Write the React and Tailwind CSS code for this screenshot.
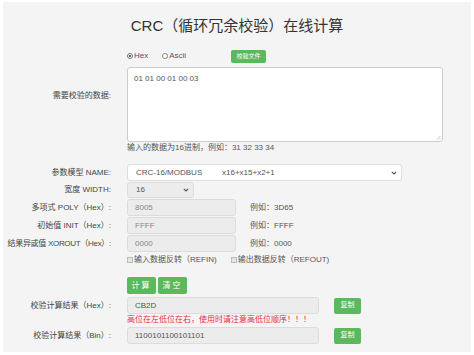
const font = { fontFamily: '"Liberation Sans", "Noto Sans CJK SC", sans-serif' };

const Chevron = () => (
  <svg width="6" height="4" viewBox="0 0 6 4" className="shrink-0">
    <path d="M0.8 0.8 L3 3 L5.2 0.8" fill="none" stroke="#555" strokeWidth="1.1" />
  </svg>
);

const Row = ({ label, className = "", labelClass = "", children }) => (
  <div className={"flex items-center " + className}>
    <div
      className={
        "flex w-[108px] shrink-0 justify-end whitespace-nowrap text-[8px] text-[#444] " + labelClass
      }
    >
      {label}
    </div>
    <div className="ml-[16px] flex flex-1 items-center h-full">{children}</div>
  </div>
);

const GreenBtn = ({ children, className = "" }) => (
  <div
    className={
      "flex items-center justify-center rounded-[2px] bg-[#5cb85c] text-white " + className
    }
  >
    {children}
  </div>
);

const GrayInput = ({ value, className = "", dim }) => (
  <div
    className={
      "flex h-full items-center rounded-[3px] border border-[#dcdcdc] bg-[#ececec] px-[7px] text-[8px] " +
      (dim ? "text-[#888] " : "text-[#555] ") +
      className
    }
  >
    {value}
  </div>
);

const Check = ({ label, className = "" }) => (
  <span className={"flex items-center text-[8px] text-[#555] " + className}>
    <span className="mr-[1px] inline-block h-[6px] w-[6px] border border-[#bbb] bg-[#e6e6e6]" />
    {label}
  </span>
);

export default function App() {
  return (
    <div className="h-[355px] w-[474px] bg-white p-[2px_3px_3px_3px]" style={font}>
      <div className="h-full bg-[#f4f4f4] pb-[8px]">
        <div className="flex h-[44px] items-center justify-center pt-[4px] text-[15px] text-[#333]">
          CRC（循环冗余校验）在线计算
        </div>

        <Row label="" className="h-[20px]">
          <span className="flex items-center text-[8px] text-[#555]">
            <span className="mr-[1px] flex h-[6px] w-[6px] items-center justify-center rounded-full border border-[#777]">
              <span className="h-[2px] w-[2px] rounded-full bg-[#333]" />
            </span>
            Hex
          </span>
          <span className="ml-[14px] flex items-center text-[8px] text-[#555]">
            <span className="mr-[1px] h-[6px] w-[6px] rounded-full border border-[#888] bg-white" />
            Ascii
          </span>
          <GreenBtn className="ml-[45px] h-[13px] w-[35px] text-[6px]">校验文件</GreenBtn>
        </Row>

        <div className="mt-[1px] flex">
          <div className="w-[108px] shrink-0 pt-[23px] text-right text-[8px] text-[#444]">
            需要校验的数据:
          </div>
          <div className="ml-[16px] relative h-[75px] w-[316px] rounded-[3px] border border-[#ccc] bg-white px-[6px] py-[5px] text-[8px] text-[#555]">
            01 01 00 01 00 03
            <svg width="5" height="5" viewBox="0 0 5 5" className="absolute bottom-[1px] right-[1px]">
              <path d="M4.5 1 L1 4.5 M4.5 3 L3 4.5" stroke="#aaa" strokeWidth="0.6" />
            </svg>
          </div>
        </div>

        <Row label="" className="h-[12px]">
          <span className="text-[8px] text-[#555]">输入的数据为16进制，例如：31 32 33 34</span>
        </Row>

        <Row label="参数模型 NAME:" className="mt-[10px] h-[17px]">
          <div className="flex h-full w-[275px] items-center rounded-[3px] border border-[#ddd] bg-white pl-[8px] pr-[4px] text-[8px] text-[#555]">
            <span className="w-[86px]">CRC-16/MODBUS</span>
            <span className="flex-1">x16+x15+x2+1</span>
            <Chevron />
          </div>
        </Row>

        <Row label="宽度 WIDTH:" className="mt-[1px] h-[16px]">
          <div className="flex h-full w-[67px] items-center rounded-[3px] border border-[#ddd] bg-[#ececec] pl-[8px] pr-[4px] text-[8px] text-[#555]">
            <span className="flex-1">16</span>
            <Chevron />
          </div>
        </Row>

        <Row label="多项式 POLY（Hex）:" className="mt-[1px] h-[17px]">
          <GrayInput value="8005" dim className="w-[109px]" />
          <span className="ml-[14px] text-[8px] text-[#555]">例如：3D65</span>
        </Row>
        <Row label="初始值 INIT（Hex）:" className="mt-[1px] h-[17px]">
          <GrayInput value="FFFF" dim className="w-[109px]" />
          <span className="ml-[14px] text-[8px] text-[#555]">例如：FFFF</span>
        </Row>
        <Row
          label="结果异或值 XOROUT（Hex）:"
          labelClass="tracking-[-0.3px]"
          className="mt-[1px] h-[17px]"
        >
          <GrayInput value="0000" dim className="w-[109px]" />
          <span className="ml-[14px] text-[8px] text-[#555]">例如：0000</span>
        </Row>

        <Row label="" className="h-[16px]">
          <Check label="输入数据反转（REFIN)" />
          <Check label="输出数据反转（REFOUT)" className="ml-[14px]" />
        </Row>

        <Row label="" className="mt-[9px] h-[17px]">
          <GreenBtn className="h-full w-[29px] text-[8px] tracking-[2px]">计算</GreenBtn>
          <GreenBtn className="ml-[2px] h-full w-[29px] text-[8px] tracking-[2px]">清空</GreenBtn>
        </Row>

        <Row label="校验计算结果（Hex）:" className="mt-[3px] h-[17px]">
          <GrayInput value="CB2D" className="w-[192px]" />
          <GreenBtn className="ml-[15px] h-[16px] w-[27px] text-[7px]">复制</GreenBtn>
        </Row>
        <Row label="" className="h-[12px]">
          <span className="text-[8px] text-[#e2323c]">高位在左低位在右，使用时请注意高低位顺序！！！</span>
        </Row>
        <Row label="校验计算结果（Bin）:" className="mt-[1px] h-[17px]">
          <GrayInput value="1100101100101101" className="w-[192px]" />
          <GreenBtn className="ml-[15px] h-[16px] w-[27px] text-[7px]">复制</GreenBtn>
        </Row>
      </div>
    </div>
  );
}
